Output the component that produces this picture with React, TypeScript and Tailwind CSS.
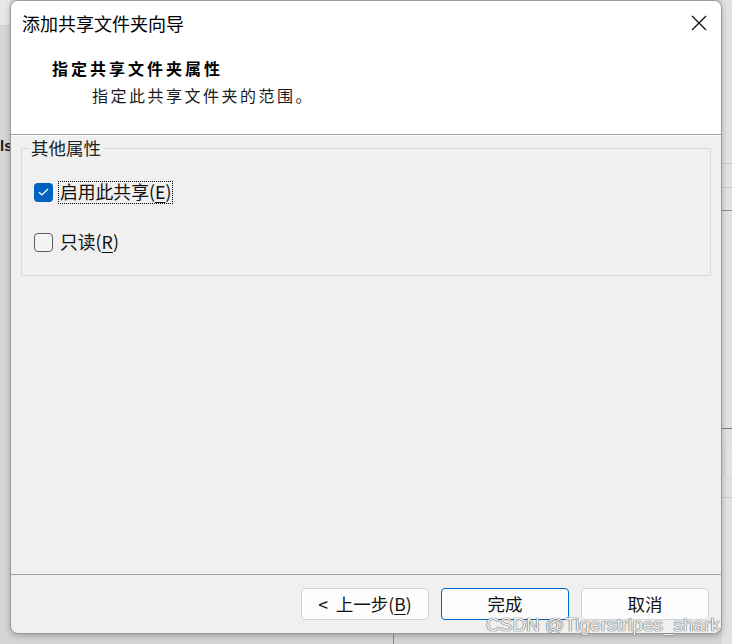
import React, { useState } from 'react';

const cjk = '"Noto Sans CJK SC", "Noto Sans", sans-serif';

function Mnemonic({ label, letter }: { label: string; letter: string }) {
  return (
    <>
      {label}(<span className="underline underline-offset-[3px]">{letter}</span>)
    </>
  );
}

function Checkbox({
  checked,
  focused,
  onToggle,
  children,
}: {
  checked: boolean;
  focused?: boolean;
  onToggle: () => void;
  children: React.ReactNode;
}) {
  return (
    <label className="flex items-center h-[24px] cursor-default select-none" onClick={onToggle}>
      <span
        className={`w-[19px] h-[19px] rounded-[4px] flex items-center justify-center ${
          checked ? 'bg-[#0062be]' : 'border border-[#5c5c5c] bg-[#f4f4f4]'
        }`}
      >
        {checked && (
          <svg width="11" height="8" viewBox="0 0 11 8" fill="none">
            <path d="M1 4.2 L3.9 7 L10 1" stroke="white" strokeWidth="1.2" />
          </svg>
        )}
      </span>
      <span
        className={`ml-[5px] h-[23px] px-[1px] flex items-center text-[17.8px] leading-none text-[#111] ${
          focused ? 'border border-dotted border-black' : 'border border-transparent'
        }`}
      >
        {children}
      </span>
    </label>
  );
}

function WizardButton({ children, primary }: { children: React.ReactNode; primary?: boolean }) {
  return (
    <button
      className={`w-[128px] h-[32px] rounded-[4px] bg-[#fdfdfd] text-[17.5px] text-[#111] flex items-center justify-center ${
        primary ? 'border border-[#0067c0]' : 'border border-[#d3d3d3]'
      }`}
    >
      {children}
    </button>
  );
}

export default function App() {
  const [enabled, setEnabled] = useState(true);
  const [readOnly, setReadOnly] = useState(false);

  return (
    <div
      className="relative w-[732px] h-[644px] overflow-hidden bg-[#d6d6d6]"
      style={{ fontFamily: cjk }}
    >
      {/* window behind the dialog */}
      <div className="absolute left-0 top-0 w-[10px] h-[26px] bg-[#e8e8e8] border-b border-[#d0d0d0]" />
      <div
        className="absolute left-0 top-[135px] text-[15px] leading-[22px] font-bold text-[#1a1a1a]"
        style={{ fontFamily: '"Liberation Sans", sans-serif' }}
      >
        ls
      </div>
      <div className="absolute left-[722px] top-0 w-[10px] h-[644px] bg-[#e2e2e2]" />
      <div className="absolute left-[722px] top-[163px] w-[10px] h-px bg-[#c8c8c8]" />
      <div className="absolute left-[722px] top-[187px] w-[10px] h-px bg-[#c8c8c8]" />
      <div className="absolute left-[722px] top-[210px] w-[10px] h-px bg-[#8a8a8a]" />
      <div className="absolute left-[722px] top-[428px] w-[10px] h-px bg-[#7a7a7a]" />
      <div className="absolute left-[724px] top-[443px] w-[10px] h-[35px] rounded-l-[3px] border border-[#d6d6d6] bg-[#e4e4e4]" />
      <div className="absolute left-[722px] top-[497px] w-[10px] h-px bg-[#c8c8c8]" />
      <div className="absolute left-[393px] top-[633px] w-px h-[11px] bg-[#8a8a8a]" />

      {/* dialog */}
      <div className="relative ml-[10px] w-[712px] h-[634px] flex flex-col rounded-[8px] border border-[#9a9a9a] bg-[#f0f0f0] overflow-hidden shadow-[0_2px_6px_rgba(0,0,0,0.25)]">
        <div className="h-[134px] shrink-0 bg-white border-b border-[#a0a0a0] pt-[10px] pl-[11px] pr-[10px]">
          <div className="flex items-center justify-between">
            <div className="text-[18px] leading-[24px] text-black">添加共享文件夹向导</div>
            <button className="w-[24px] h-[24px] flex items-center justify-center">
              <svg width="16" height="16" viewBox="0 0 16 16" fill="none">
                <path d="M1 1 L15 15 M15 1 L1 15" stroke="#111" strokeWidth="1.3" />
              </svg>
            </button>
          </div>
          <div className="mt-[22px] ml-[30px] text-[16px] leading-[22px] font-bold tracking-[3px] text-black">
            指定共享文件夹属性
          </div>
          <div className="mt-[5px] ml-[70px] text-[16px] leading-[22px] tracking-[2.5px] text-[#1a1a1a]">
            指定此共享文件夹的范围。
          </div>
        </div>

        <div className="flex-1 border-t border-white px-[10px]">
          <fieldset className="border border-[#dadada] w-[690px] pt-[20px] pb-[21px]">
            <legend className="ml-[7px] px-[2px] text-[17.5px] leading-[24px] text-[#222]">其他属性</legend>
            <div className="pl-[12px] flex flex-col gap-[26px]">
              <Checkbox checked={enabled} focused onToggle={() => setEnabled(!enabled)}>
                <Mnemonic label="启用此共享" letter="E" />
              </Checkbox>
              <Checkbox checked={readOnly} onToggle={() => setReadOnly(!readOnly)}>
                <Mnemonic label="只读" letter="R" />
              </Checkbox>
            </div>
          </fieldset>
        </div>

        <div className="shrink-0 border-t border-[#a0a0a0] pt-[13px] pb-[13px] pr-[12px] flex justify-end gap-[12px]">
          <WizardButton>
            &lt;&nbsp;&nbsp;上一步(<span className="underline underline-offset-[3px]">B</span>)
          </WizardButton>
          <WizardButton primary>完成</WizardButton>
          <WizardButton>取消</WizardButton>
        </div>
      </div>

      {/* watermark */}
      <div
        className="absolute left-[486px] top-[613px] text-[19px] leading-[24px] text-[#f2f2f2] [text-shadow:0_0_1px_#444,0_0_1px_#444]"
        style={{ fontFamily: '"Liberation Sans", Arial, sans-serif' }}
      >
        CSDN @Tigerstripes_shark
      </div>
    </div>
  );
}
